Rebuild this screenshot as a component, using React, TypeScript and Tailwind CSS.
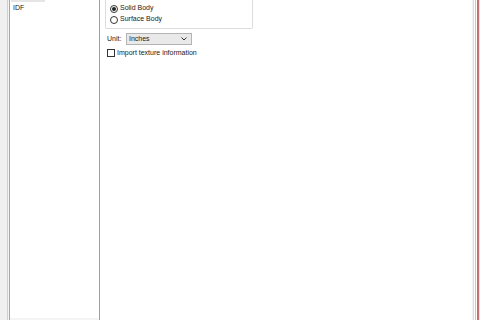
export default function App() {
  const font = { fontFamily: '"Liberation Sans", Arial, sans-serif' };
  return (
    <div className="flex h-[320px] w-[480px] overflow-hidden bg-white text-[7px] text-[#1a1a1a]" style={font}>
      <div className="w-[7px] bg-[#f0f0f0]" />
      <div className="w-px bg-[#d0d0d0]" />
      <div className="w-px bg-[#f4f4f4]" />
      <div className="w-px bg-[#a8a8a8]" />
      <div className="flex w-[89px] flex-col bg-white">
        <div className="ml-px h-[2px] w-[34px] bg-[#e5e5e5]" />
        <div className="pl-[3px] pt-[1px] leading-[10px]">IDF</div>
        <div className="flex-1" />
        <div className="h-[2px] bg-[#f4f4f4]" />
      </div>
      <div className="w-px bg-[#a0a0a0]" />
      <div className="flex flex-1 flex-col pl-[5px]">
        <div className="w-[148px] rounded-b-[2px] border-x border-b border-[#dcdcdc] pb-[3px] pl-[4px] pt-[3px]">
          <div className="flex h-[11px] items-center gap-[2px]">
            <span className="flex h-[8px] w-[8px] items-center justify-center rounded-full border border-[#333]">
              <span className="h-[4px] w-[4px] rounded-full bg-[#222]" />
            </span>
            <span>Solid Body</span>
          </div>
          <div className="flex h-[11px] items-center gap-[2px]">
            <span className="h-[8px] w-[8px] rounded-full border border-[#333]" />
            <span>Surface Body</span>
          </div>
        </div>
        <div className="mt-[4px] flex items-center pl-[2px]">
          <span className="w-[19px]">Unit:</span>
          <div className="flex h-[12px] w-[66px] items-center justify-between border border-[#b4b4b4] bg-[#e9e9e9] pl-[2px] pr-[4px]">
            <span>Inches</span>
            <svg width="6" height="4" viewBox="0 0 6 4"><path d="M0.5 0.5 L3 3 L5.5 0.5" fill="none" stroke="#333" strokeWidth="1" /></svg>
          </div>
        </div>
        <div className="mt-[3px] flex items-center gap-[2px] pl-[2px]">
          <span className="h-[8px] w-[8px] border border-[#333] bg-white" />
          <span>Import texture information</span>
        </div>
      </div>
      <div className="w-px bg-[#f2f2f2]" />
      <div className="w-px bg-[#dcdcdc]" />
      <div className="w-px bg-white" />
      <div className="w-px bg-[#c8c8c8]" />
      <div className="w-px bg-white" />
      <div className="w-[2px] bg-[#c87070]" />
      <div className="w-px bg-[#f0e0e0]" />
    </div>
  );
}
